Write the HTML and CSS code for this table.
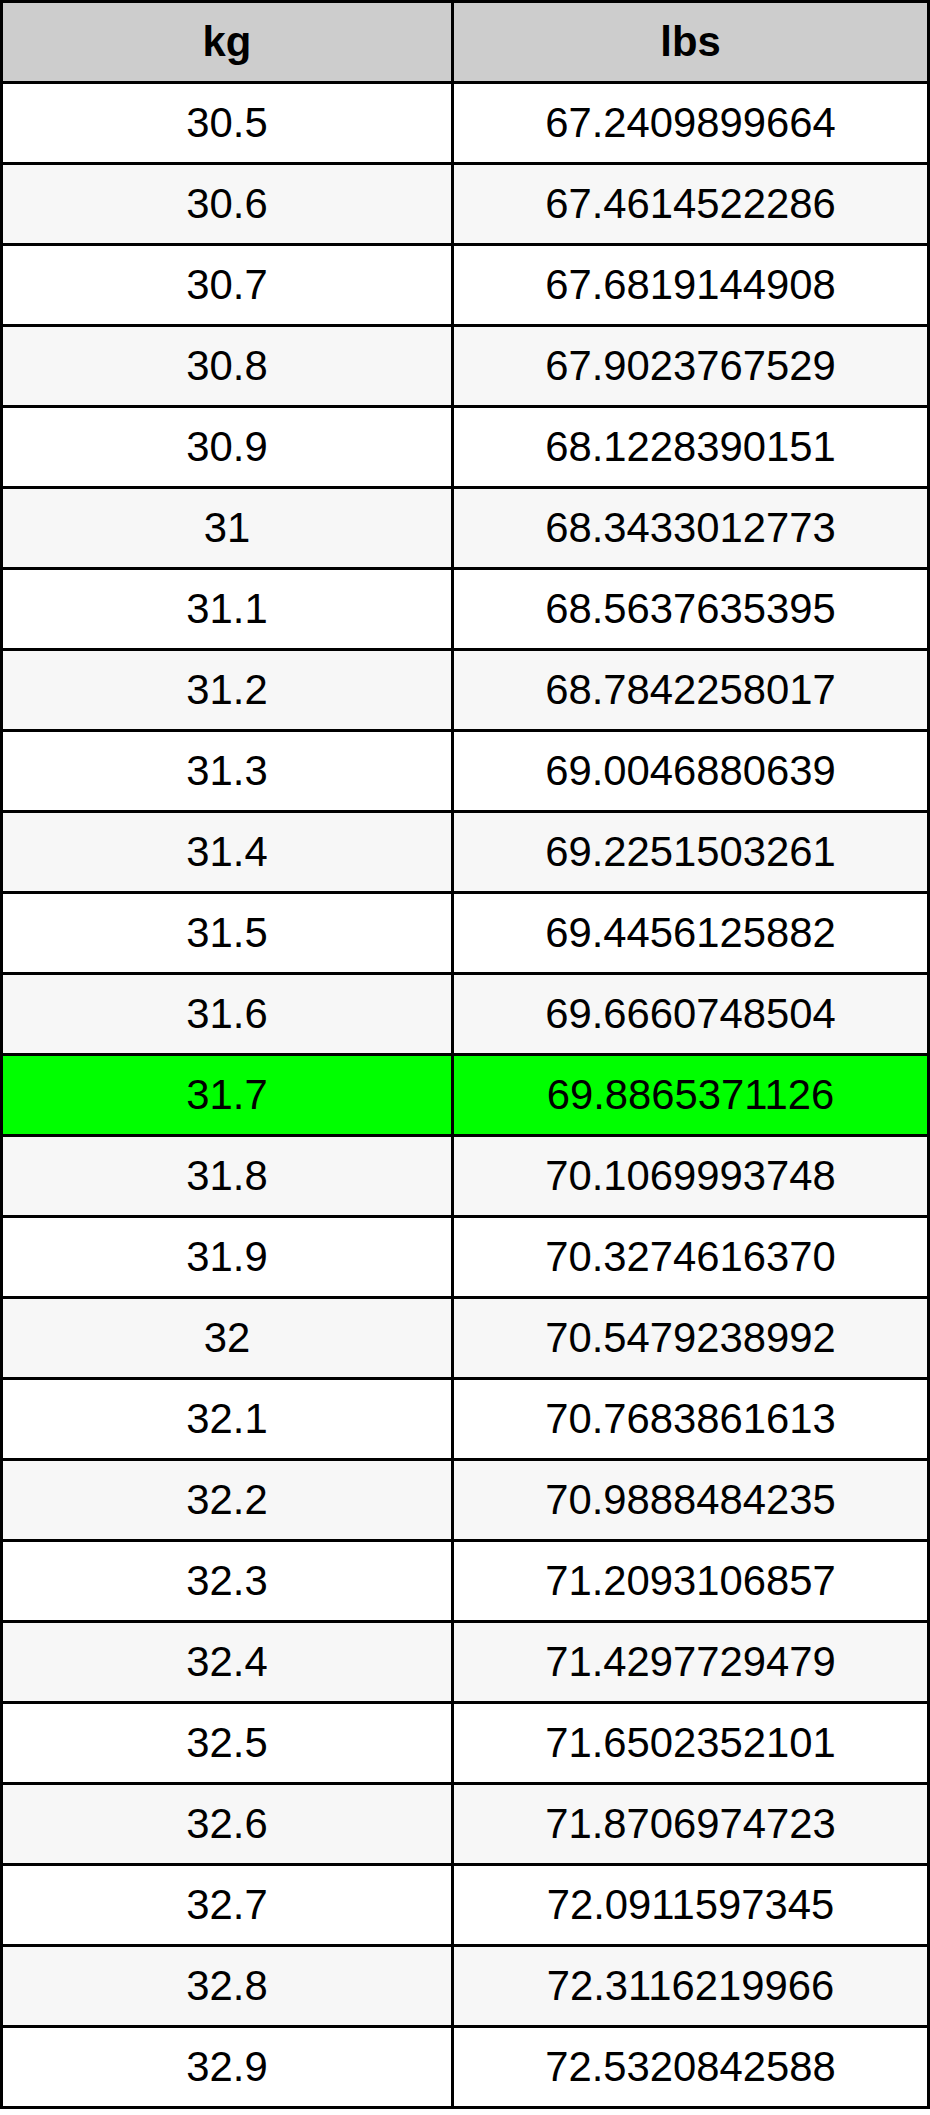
FILE: index.html
```html
<!DOCTYPE html>
<html>
<head>
<meta charset="utf-8">
<link rel="stylesheet" href="styles.css">
</head>
<body>
<table class="conv">
<colgroup><col class="c1"><col class="c2"></colgroup>
<thead><tr><th>kg</th><th>lbs</th></tr></thead>
<tbody>
<tr><td>30.5</td><td>67.2409899664</td></tr>
<tr><td>30.6</td><td>67.4614522286</td></tr>
<tr><td>30.7</td><td>67.6819144908</td></tr>
<tr><td>30.8</td><td>67.9023767529</td></tr>
<tr><td>30.9</td><td>68.1228390151</td></tr>
<tr><td>31</td><td>68.3433012773</td></tr>
<tr><td>31.1</td><td>68.5637635395</td></tr>
<tr><td>31.2</td><td>68.7842258017</td></tr>
<tr><td>31.3</td><td>69.0046880639</td></tr>
<tr><td>31.4</td><td>69.2251503261</td></tr>
<tr><td>31.5</td><td>69.4456125882</td></tr>
<tr><td>31.6</td><td>69.6660748504</td></tr>
<tr class="hl"><td>31.7</td><td>69.8865371126</td></tr>
<tr><td>31.8</td><td>70.1069993748</td></tr>
<tr><td>31.9</td><td>70.3274616370</td></tr>
<tr><td>32</td><td>70.5479238992</td></tr>
<tr><td>32.1</td><td>70.7683861613</td></tr>
<tr><td>32.2</td><td>70.9888484235</td></tr>
<tr><td>32.3</td><td>71.2093106857</td></tr>
<tr><td>32.4</td><td>71.4297729479</td></tr>
<tr><td>32.5</td><td>71.6502352101</td></tr>
<tr><td>32.6</td><td>71.8706974723</td></tr>
<tr><td>32.7</td><td>72.0911597345</td></tr>
<tr><td>32.8</td><td>72.3116219966</td></tr>
<tr><td>32.9</td><td>72.5320842588</td></tr>
</tbody>
</table>
</body>
</html>
```
FILE: styles.css
```css
html, body {
  margin: 0;
  padding: 0;
  background: #ffffff;
}
.conv {
  width: 930px;
  table-layout: fixed;
  border-collapse: separate;
  border-spacing: 3px;
  background: #000000;
  font-family: "Liberation Sans", Arial, sans-serif;
  font-size: 41.8px;
  color: #000000;
}
.c1 { width: 448px; }
.c2 { width: 473px; }
.conv th, .conv td {
  height: 78px;
  padding: 0;
  text-align: center;
  vertical-align: middle;
  line-height: 1;
}
.conv th {
  background: #cdcdcd;
  font-weight: bold;
}
.conv tbody tr:nth-child(odd) td { background: #ffffff; }
.conv tbody tr:nth-child(even) td { background: #f7f7f7; }
.conv tbody tr.hl td { background: #00ff00; }
```
